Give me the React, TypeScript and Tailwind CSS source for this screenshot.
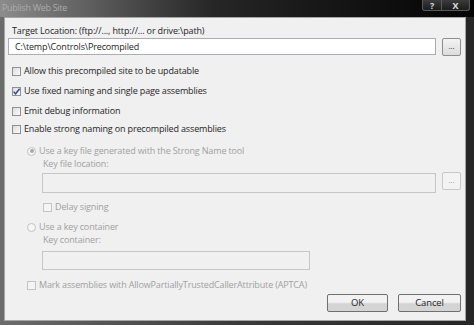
import React from "react";

const font = { fontFamily: '"Open Sans", "Liberation Sans", sans-serif' };

function Box({ checked, disabled }: { checked?: boolean; disabled?: boolean }) {
  return (
    <span
      className={`relative inline-block w-[9px] h-[9px] shrink-0 border ${
        disabled ? "border-[#c4c4c4] bg-[#f4f4f4]" : "border-[#8e8f8f] bg-gradient-to-br from-[#dcdcdc] to-[#fbfbfb]"
      }`}
    >
      {checked && (
        <svg viewBox="0 0 9 9" className="absolute -left-px -top-px w-[9px] h-[9px]">
          <path d="M1.6 4.6 L3.6 6.8 L7.6 1.8" fill="none" stroke="#31438a" strokeWidth="1.4" />
        </svg>
      )}
    </span>
  );
}

function Radio({ on }: { on?: boolean }) {
  return (
    <span className="relative inline-flex items-center justify-center w-[9px] h-[9px] shrink-0 rounded-full border border-[#c2c2c2] bg-[#f6f6f6]">
      {on && <span className="w-[4px] h-[4px] rounded-full bg-[#a8a8a8]" />}
    </span>
  );
}

function Check({ label, checked, disabled, className = "" }: { label: string; checked?: boolean; disabled?: boolean; className?: string }) {
  return (
    <div className={`flex items-center h-[14px] gap-[3px] ${disabled ? "text-[#a0a0a0]" : "text-[#1e1e1e]"} ${className}`}>
      <Box checked={checked} disabled={disabled} />
      <span className="whitespace-nowrap">{label}</span>
    </div>
  );
}

function Browse({ disabled }: { disabled?: boolean }) {
  return (
    <div
      className={`w-[19px] h-[18px] rounded-[2px] border flex items-center justify-center text-[8px] leading-none pb-[2px] ${
        disabled ? "border-[#c8c8c8] bg-[#f3f3f3] text-[#a0a0a0]" : "border-[#8d8d8d] bg-gradient-to-b from-[#f4f4f4] to-[#dcdcdc] text-[#333]"
      }`}
    >
      ...
    </div>
  );
}

function Btn({ label, w }: { label: string; w: string }) {
  return (
    <div className={`${w} h-[18px] rounded-[2px] border border-[#707070] bg-gradient-to-b from-[#f2f2f2] from-45% to-[#d4d4d4] to-55% flex items-center justify-center text-[#1e1e1e] text-[9.5px]`}>
      {label}
    </div>
  );
}

export default function App() {
  return (
    <div
      className="w-[474px] h-[325px] flex flex-col bg-gradient-to-r from-[#6c6c6c] via-[#3a3a3a] to-[#262626] overflow-hidden text-[9px] leading-[12px] tracking-[-0.15px]"
      style={font}
    >
      {/* title bar */}
      <div className="relative h-[17px] shrink-0 bg-gradient-to-r from-[#8c8c8c] via-[#262626] via-45% to-[#050505] text-[#ababab]">
        <span className="absolute left-[2px] top-[2px] text-[9px] tracking-[-0.3px]">Publish Web Site</span>
        <div className="absolute right-[4px] top-0 flex">
          <div className="w-[20px] h-[11px] rounded-bl-[3px] border border-t-0 border-[#5a5a5a] bg-gradient-to-b from-[#3c3c3c] to-[#1c1c1c] flex items-center justify-center text-[#d8d8d8] text-[9px] font-bold leading-none">
            ?
          </div>
          <div className="w-[28px] h-[11px] rounded-br-[3px] border border-l-0 border-t-0 border-[#5a5a5a] bg-gradient-to-b from-[#3c3c3c] to-[#1c1c1c] flex items-center justify-center text-[#e0e0e0] text-[9px] font-bold leading-none">
            X
          </div>
        </div>
      </div>

      {/* body */}
      <div className="flex-1 flex pl-[4px] pr-[8px] pb-[4px]">
        <div className="flex-1 flex flex-col bg-[#f0f0f0] border border-[#a5a5a5] pl-[3px] pr-[4px] pt-[6px]">
          <div className="h-[14px] leading-[14px] pl-[4px] text-[#1e1e1e] whitespace-nowrap">Target Location: (ftp://..., http://... or drive:\path)</div>
          <div className="flex items-start gap-[6px]">
            <div className="flex-1 h-[17px] bg-white border border-[#abadb3] flex items-center pl-[6px] text-[#1e1e1e]">C:\temp\Controls\Precompiled</div>
            <Browse />
          </div>

          <div className="pl-[4px] flex flex-col">
            <Check className="mt-[8px]" label="Allow this precompiled site to be updatable" />
            <Check className="mt-[6px]" label="Use fixed naming and single page assemblies" checked />
            <Check className="mt-[6px]" label="Emit debug information" />
            <Check className="mt-[4px]" label="Enable strong naming on precompiled assemblies" />
          </div>

          <div className="pl-[19px] flex flex-col text-[#a0a0a0]">
            <div className="flex items-center h-[14px] gap-[3px] mt-[8px]">
              <Radio on />
              <span className="whitespace-nowrap">Use a key file generated with the Strong Name tool</span>
            </div>
            <div className="pl-[16px] h-[12px] leading-[12px]">Key file location:</div>
            <div className="pl-[15px] flex items-start gap-[6px] mt-[2px]">
              <div className="flex-1 h-[20px] bg-[#f0f0f0] border border-[#c6c6c6] mt-[1px]" />
              <Browse disabled />
            </div>
            <div className="pl-[16px]">
              <Check className="mt-[7px]" label="Delay signing" disabled />
            </div>
            <div className="flex items-center h-[14px] gap-[3px] mt-[6px]">
              <Radio />
              <span className="whitespace-nowrap">Use a key container</span>
            </div>
            <div className="pl-[16px] h-[12px] leading-[12px]">Key container:</div>
            <div className="pl-[15px] mt-[5px]">
              <div className="w-[268px] h-[19px] bg-[#f0f0f0] border border-[#c6c6c6]" />
            </div>
            <Check className="mt-[8px]" label="Mark assemblies with AllowPartiallyTrustedCallerAttribute (APTCA)" disabled />
          </div>

          <div className="flex justify-end gap-[10px] mt-[2px]">
            <Btn label="OK" w="w-[61px]" />
            <Btn label="Cancel" w="w-[63px]" />
          </div>
        </div>
      </div>
    </div>
  );
}
